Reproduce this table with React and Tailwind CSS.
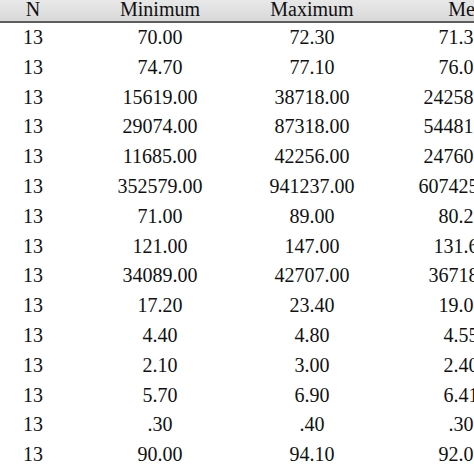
import React from "react";

const rows = [
  ["13", "70.00", "72.30", "71.3385"],
  ["13", "74.70", "77.10", "76.0154"],
  ["13", "15619.00", "38718.00", "24258.4615"],
  ["13", "29074.00", "87318.00", "54481.7692"],
  ["13", "11685.00", "42256.00", "24760.6923"],
  ["13", "352579.00", "941237.00", "607425.3846"],
  ["13", "71.00", "89.00", "80.2308"],
  ["13", "121.00", "147.00", "131.6154"],
  ["13", "34089.00", "42707.00", "36718.077"],
  ["13", "17.20", "23.40", "19.0615"],
  ["13", "4.40", "4.80", "4.5538"],
  ["13", "2.10", "3.00", "2.4000"],
  ["13", "5.70", "6.90", "6.4154"],
  ["13", ".30", ".40", ".3077"],
  ["13", "90.00", "94.10", "92.0231"],
];

const cols = "grid grid-cols-[66px_188px_116px_202px] w-[572px]";

export default function App() {
  return (
    <div className="w-[474px] h-[474px] overflow-hidden bg-white font-['Liberation_Serif',serif] text-[20px] text-[#111111]">
      <div
        className={`${cols} h-[23px] leading-[18px] bg-gradient-to-b from-[#e8e8e8] to-[#d9d9d9] border-b-2 border-[#5e5e5e]`}
      >
        <div className="text-center whitespace-nowrap">N</div>
        <div className="text-center whitespace-nowrap">Minimum</div>
        <div className="text-center whitespace-nowrap">Maximum</div>
        <div className="text-center whitespace-nowrap">Mean</div>
      </div>
      {rows.map((r, i) => (
        <div key={i} className={`${cols} h-[29.8px] leading-[29.8px]`}>
          {r.map((c, j) => (
            <div key={j} className="text-center whitespace-nowrap">
              {c}
            </div>
          ))}
        </div>
      ))}
    </div>
  );
}
